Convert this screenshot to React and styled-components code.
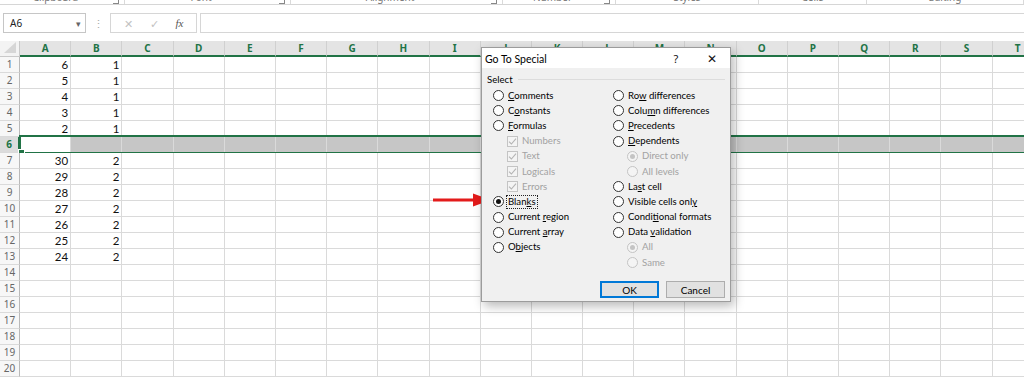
import React from 'react';
import styled, { createGlobalStyle } from 'styled-components';

const GREEN = '#217346';

const GlobalStyle = createGlobalStyle`
  html, body { margin: 0; padding: 0; background: #fff; }
  body { font-family: "Noto Sans", sans-serif; }
`;

const COLS = 'ABCDEFGHIJKLMNOPQRST'.split('');
const ROWS = Array.from({ length: 20 }, (_, i) => i + 1);
const DATA = {
  1: [6, 1], 2: [5, 1], 3: [4, 1], 4: [3, 1], 5: [2, 1],
  7: [30, 2], 8: [29, 2], 9: [28, 2], 10: [27, 2], 11: [26, 2], 12: [25, 2], 13: [24, 2],
};
const SELECTED_ROW = 6;

const GROUPS = [
  { label: 'Clipboard', w: 125, launcher: true },
  { label: 'Font', w: 166, launcher: true },
  { label: 'Alignment', w: 212, launcher: true },
  { label: 'Number', w: 113, launcher: true },
  { label: 'Styles', w: 143 },
  { label: 'Cells', w: 108 },
  { label: 'Editing', w: 157 },
];

const LEFT_OPTIONS = [
  { label: 'Comments', u: 0, type: 'radio' },
  { label: 'Constants', u: 1, type: 'radio' },
  { label: 'Formulas', u: 0, type: 'radio' },
  { label: 'Numbers', type: 'check', sub: true, disabled: true, checked: true },
  { label: 'Text', type: 'check', sub: true, disabled: true, checked: true },
  { label: 'Logicals', type: 'check', sub: true, disabled: true, checked: true },
  { label: 'Errors', type: 'check', sub: true, disabled: true, checked: true },
  { label: 'Blanks', u: 4, type: 'radio', checked: true, focus: true },
  { label: 'Current region', u: 8, type: 'radio' },
  { label: 'Current array', u: 8, type: 'radio' },
  { label: 'Objects', u: 1, type: 'radio' },
];

const RIGHT_OPTIONS = [
  { label: 'Row differences', u: 2, type: 'radio' },
  { label: 'Column differences', u: 4, type: 'radio' },
  { label: 'Precedents', u: 0, type: 'radio' },
  { label: 'Dependents', u: 0, type: 'radio' },
  { label: 'Direct only', type: 'radio', sub: true, disabled: true, checked: true },
  { label: 'All levels', type: 'radio', sub: true, disabled: true },
  { label: 'Last cell', u: 2, type: 'radio' },
  { label: 'Visible cells only', u: 17, type: 'radio' },
  { label: 'Conditional formats', u: 5, type: 'radio' },
  { label: 'Data validation', u: 5, type: 'radio' },
  { label: 'All', type: 'radio', sub: true, disabled: true, checked: true },
  { label: 'Same', type: 'radio', sub: true, disabled: true },
];

const renderLabel = (text, u) => {
  if (u === undefined) return text;
  return (
    <>
      {text.slice(0, u)}
      <U>{text[u]}</U>
      {text.slice(u + 1)}
    </>
  );
};

const OptionItem = ({ opt }) => (
  <Option $sub={opt.sub} $disabled={opt.disabled}>
    {opt.type === 'radio' ? (
      <Radio $checked={opt.checked} $disabled={opt.disabled} />
    ) : (
      <Check>
        <svg width="9" height="9" viewBox="0 0 9 9">
          <path d="M1 4.6 L3.4 7 L8 1.6" fill="none" stroke="#b4b4b4" strokeWidth="1.1" />
        </svg>
      </Check>
    )}
    <OptionText $focus={opt.focus}>{renderLabel(opt.label, opt.u)}</OptionText>
  </Option>
);

const App = () => {
  return (
    <Page>
      <GlobalStyle />

      <Ribbon>
        {GROUPS.map((g) => (
          <Group key={g.label} $w={g.w}>
            <GroupLabel>{g.label}</GroupLabel>
            {g.launcher && <Launcher />}
          </Group>
        ))}
      </Ribbon>

      <FormulaBar>
        <NameBox>
          <span>A6</span>
          <Caret>▾</Caret>
        </NameBox>
        <Grip>⋮</Grip>
        <FxBox>
          <FxIcon>✕</FxIcon>
          <FxIcon>✓</FxIcon>
          <FxLabel>fx</FxLabel>
        </FxBox>
        <FormulaInput />
      </FormulaBar>

      <Sheet>
        <Row>
          <Corner>
            <svg width="14" height="12" viewBox="0 0 14 12">
              <polygon points="13,0 13,11 1,11" fill="#d6d6d6" />
            </svg>
          </Corner>
          {COLS.map((c) => (
            <ColHead key={c}>{c}</ColHead>
          ))}
        </Row>
        {ROWS.map((r) => {
          const sel = r === SELECTED_ROW;
          return (
            <Row key={r}>
              <RowHead $sel={sel}>{r}</RowHead>
              {COLS.map((c, ci) => (
                <Cell key={c} $shade={sel && ci > 0}>
                  {DATA[r] && ci < 2 ? DATA[r][ci] : ''}
                </Cell>
              ))}
              {sel && <SelectionFrame />}
            </Row>
          );
        })}
      </Sheet>

      <Arrow width="64" height="18" viewBox="0 0 64 18">
        <line x1="3" y1="9" x2="46" y2="9" stroke="#e31b1b" strokeWidth="3" />
        <polygon points="43,2.5 61,9 43,15.5" fill="#e31b1b" />
      </Arrow>

      <Dialog>
        <TitleBar>
          <Title>Go To Special</Title>
          <TitleButton>?</TitleButton>
          <TitleButton $close>✕</TitleButton>
        </TitleBar>
        <DialogBody>
          <Legend>
            <span>Select</span>
            <LegendLine />
          </Legend>
          <Columns>
            <OptionCol>
              {LEFT_OPTIONS.map((o) => (
                <OptionItem key={o.label} opt={o} />
              ))}
            </OptionCol>
            <OptionCol>
              {RIGHT_OPTIONS.map((o) => (
                <OptionItem key={o.label} opt={o} />
              ))}
            </OptionCol>
          </Columns>
          <Buttons>
            <Button $default>OK</Button>
            <Button>Cancel</Button>
          </Buttons>
        </DialogBody>
      </Dialog>
    </Page>
  );
};

export default App;

// Styles
const Page = styled.div`
  position: relative;
  width: 1024px;
  height: 378px;
  overflow: hidden;
  background: #fff;
`;

const Ribbon = styled.div`
  display: flex;
  height: 5px;
  box-sizing: border-box;
  border-bottom: 1px solid #d6d6d6;
  overflow: hidden;
`;

const Group = styled.div`
  width: ${(p) => p.$w}px;
  flex-shrink: 0;
  display: flex;
  box-sizing: border-box;
  border-right: 1px solid #dadada;
`;

const GroupLabel = styled.div`
  flex: 1;
  text-align: center;
  font-size: 10px;
  line-height: 10px;
  margin-top: -8px;
  color: #777;
`;

const Launcher = styled.div`
  width: 5px;
  height: 3px;
  margin: 0 5px 0 2px;
  border-right: 1px solid #888;
  border-bottom: 1px solid #888;
`;

const FormulaBar = styled.div`
  display: flex;
  align-items: center;
  height: 20px;
  margin-top: 8px;
  padding-left: 3px;
`;

const NameBox = styled.div`
  width: 83px;
  height: 20px;
  box-sizing: border-box;
  border: 1px solid #c6c6c6;
  display: flex;
  align-items: center;
  justify-content: space-between;
  padding: 0 4px 0 6px;
  font-size: 10px;
  color: #222;
`;

const Caret = styled.span`
  font-size: 9px;
  color: #666;
`;

const Grip = styled.div`
  width: 24px;
  text-align: center;
  font-size: 11px;
  color: #aaa;
`;

const FxBox = styled.div`
  width: 87px;
  height: 20px;
  box-sizing: border-box;
  border: 1px solid #d6d6d6;
  display: flex;
  align-items: center;
  justify-content: space-around;
  padding: 0 4px;
`;

const FxIcon = styled.span`
  font-size: 11px;
  color: #c2c2c2;
`;

const FxLabel = styled.span`
  font-family: "Liberation Serif", serif;
  font-style: italic;
  font-size: 11px;
  color: #555;
`;

const FormulaInput = styled.div`
  flex: 1;
  height: 20px;
  box-sizing: border-box;
  margin-left: 3px;
  border: 1px solid #d6d6d6;
  border-right: none;
`;

const Sheet = styled.div`
  margin-top: 8px;
  display: flex;
  flex-direction: column;
`;

const Row = styled.div`
  position: relative;
  display: flex;
  height: 16px;
`;

const Corner = styled.div`
  width: 20px;
  flex-shrink: 0;
  box-sizing: border-box;
  background: #f3f3f3;
  border-right: 1px solid #c9c9c9;
  border-bottom: 1px solid #c9c9c9;
  display: flex;
  align-items: flex-end;
  justify-content: flex-end;
  padding: 0 2px 2px 0;
`;

const ColHead = styled.div`
  width: 51.2px;
  flex-shrink: 0;
  box-sizing: border-box;
  background: #e4e4e4;
  border-right: 1px solid #d0d0d0;
  border-bottom: 2px solid ${GREEN};
  color: ${GREEN};
  font-weight: 700;
  font-size: 10px;
  line-height: 14px;
  text-align: center;
`;

const RowHead = styled.div`
  width: 20px;
  flex-shrink: 0;
  box-sizing: border-box;
  background: ${(p) => (p.$sel ? '#dcdcdc' : '#f7f7f7')};
  border-right: ${(p) => (p.$sel ? `2px solid ${GREEN}` : '1px solid #b9b9b9')};
  border-bottom: 1px solid #dadada;
  color: ${(p) => (p.$sel ? GREEN : '#666')};
  font-weight: ${(p) => (p.$sel ? 700 : 400)};
  font-size: 10px;
  line-height: 15px;
  text-align: center;
`;

const Cell = styled.div`
  width: 51.2px;
  flex-shrink: 0;
  box-sizing: border-box;
  background: ${(p) => (p.$shade ? '#c6c6c6' : '#fff')};
  border-right: 1px solid #dadada;
  border-bottom: 1px solid #dadada;
  font-family: Lato, "Liberation Sans", sans-serif;
  font-size: 11.5px;
  line-height: 16px;
  text-align: right;
  padding-right: 2px;
  color: #111;
`;

const SelectionFrame = styled.div`
  position: absolute;
  left: 19px;
  right: -2px;
  top: -2px;
  bottom: -1px;
  border: 2px solid ${GREEN};
  pointer-events: none;

  &::after {
    content: '';
    position: absolute;
    left: -3px;
    bottom: -4px;
    width: 5px;
    height: 5px;
    background: ${GREEN};
    border: 1px solid #fff;
  }
`;

const Arrow = styled.svg`
  position: absolute;
  left: 430px;
  top: 191px;
`;

const Dialog = styled.div`
  position: absolute;
  left: 481px;
  top: 47px;
  width: 250px;
  height: 255px;
  box-sizing: border-box;
  border: 1px solid #9c9c9c;
  background: #f0f0f0;
  box-shadow: 3px 4px 10px rgba(0, 0, 0, 0.28);
  display: flex;
  flex-direction: column;
  font-family: Lato, "Noto Sans", sans-serif;
  font-size: 9.6px;
  color: #000;
`;

const TitleBar = styled.div`
  display: flex;
  align-items: center;
  height: 20px;
  background: #fff;
  padding-left: 3px;
`;

const Title = styled.div`
  flex: 1;
  font-size: 10.5px;
  padding-top: 1px;
`;

const TitleButton = styled.div`
  width: 36px;
  text-align: center;
  font-family: "Noto Sans", sans-serif;
  font-size: ${(p) => (p.$close ? 12 : 11)}px;
  color: #111;
`;

const DialogBody = styled.div`
  flex: 1;
  display: flex;
  flex-direction: column;
  padding: 2px 5px 0 4px;
`;

const Legend = styled.div`
  display: flex;
  align-items: center;
  gap: 5px;
  height: 18px;
  padding-left: 1px;
`;

const LegendLine = styled.div`
  flex: 1;
  height: 1px;
  background: #dcdcdc;
`;

const Columns = styled.div`
  display: grid;
  grid-template-columns: 120px 1fr;
  padding-left: 7px;
`;

const OptionCol = styled.div`
  display: flex;
  flex-direction: column;
`;

const Option = styled.div`
  display: flex;
  align-items: center;
  gap: 3px;
  height: 15.2px;
  padding-left: ${(p) => (p.$sub ? 14 : 0)}px;
  color: ${(p) => (p.$disabled ? '#a2a2a2' : '#000')};
  white-space: nowrap;
`;

const Radio = styled.span`
  width: 11px;
  height: 11px;
  flex-shrink: 0;
  box-sizing: border-box;
  border-radius: 50%;
  border: 1px solid ${(p) => (p.$disabled ? '#c4c4c4' : '#333')};
  background: ${(p) => (p.$disabled ? '#f4f4f4' : '#fff')};
  display: flex;
  align-items: center;
  justify-content: center;

  &::after {
    content: '';
    display: ${(p) => (p.$checked ? 'block' : 'none')};
    width: 5px;
    height: 5px;
    border-radius: 50%;
    background: ${(p) => (p.$disabled ? '#c4c4c4' : '#111')};
  }
`;

const Check = styled.span`
  width: 11px;
  height: 11px;
  flex-shrink: 0;
  box-sizing: border-box;
  border: 1px solid #c4c4c4;
  background: #f4f4f4;
  display: flex;
  align-items: center;
  justify-content: center;
`;

const OptionText = styled.span`
  padding: 0 1px;
  line-height: 12px;
  outline: ${(p) => (p.$focus ? '1px dotted #222' : 'none')};
`;

const U = styled.span`
  text-decoration: underline;
`;

const Buttons = styled.div`
  display: flex;
  justify-content: flex-end;
  gap: 7px;
  margin-top: 11px;
`;

const Button = styled.div`
  width: 59px;
  height: 17px;
  box-sizing: border-box;
  border: 1px solid ${(p) => (p.$default ? '#0078d7' : '#adadad')};
  box-shadow: ${(p) => (p.$default ? 'inset 0 0 0 1px #0078d7' : 'none')};
  background: #e1e1e1;
  display: flex;
  align-items: center;
  justify-content: center;
  font-size: 10px;
`;
